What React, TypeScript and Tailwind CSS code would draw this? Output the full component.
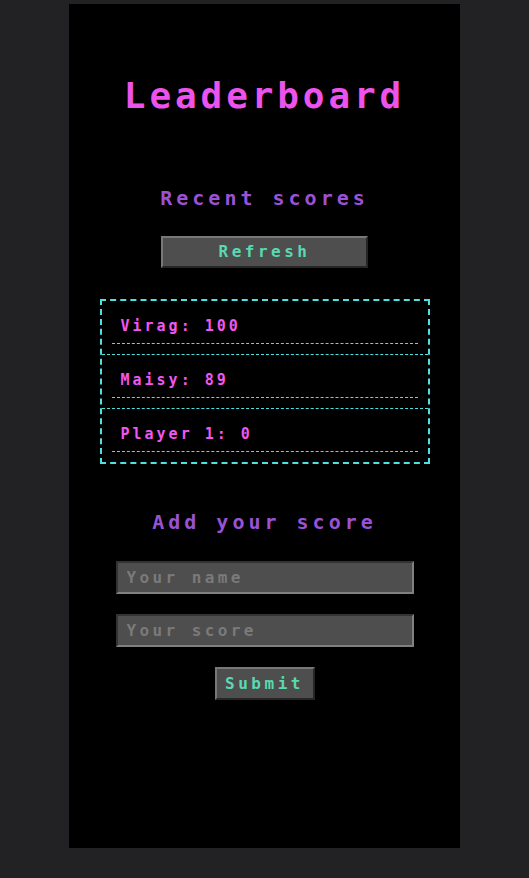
import { useState } from "react"

type Score = { name: string; score: number }

const initialScores: Score[] = [
  { name: "Virag", score: 100 },
  { name: "Maisy", score: 89 },
  { name: "Player 1", score: 0 },
]

const mono = "font-['DejaVu_Sans_Mono','Liberation_Mono',monospace] font-bold"

export default function App() {
  const [scores] = useState<Score[]>(initialScores)
  const [name, setName] = useState("")
  const [score, setScore] = useState("")

  return (
    <div className="min-h-[878px] bg-[#222224] pt-[4px]">
      <main
        className={`${mono} mx-auto flex h-[844px] w-[391px] flex-col items-center bg-black pt-[74px]`}
      >
        <h1 className="text-[36px] leading-[36px] tracking-[3.9px] text-[#ec52ec]">
          Leaderboard
        </h1>

        <h2 className="mt-[74px] text-[20px] leading-[20px] tracking-[4px] text-[#9a52d4]">
          Recent scores
        </h2>

        <button className="mt-[28px] h-[32px] w-[207px] border-2 border-t-[#787878] border-l-[#787878] border-b-[#262626] border-r-[#262626] bg-[#4e4e4e] text-[16px] tracking-[3.5px] text-[#5ad8b0]">
          Refresh
        </button>

        <ul className="mt-[31px] w-[330px] border-2 border-dashed border-[#4fe0e0]">
          {scores.map((s, i) => (
            <li
              key={s.name}
              className={`px-[10px] pt-[13px] pb-[10px] ${
                i < scores.length - 1 ? "border-b border-dashed border-[#4fe0e0]" : ""
              }`}
            >
              <div className="border-b border-dashed border-[#4fe0e0] pb-[5px] pl-[9px] text-[15px] leading-[24px] tracking-[3px] text-[#f056f0]">
                {s.name}: {s.score}
              </div>
            </li>
          ))}
        </ul>

        <h2 className="mt-[48px] text-[20px] leading-[20px] tracking-[4px] text-[#9a52d4]">
          Add your score
        </h2>

        <form
          className="mt-[29px] flex flex-col items-center gap-[20px]"
          onSubmit={(e) => e.preventDefault()}
        >
          <input
            value={name}
            onChange={(e) => setName(e.target.value)}
            placeholder="Your name"
            className="h-[33px] w-[298px] border-2 border-t-[#333] border-l-[#333] border-b-[#808080] border-r-[#808080] bg-[#4e4e4e] px-[9px] text-[16px] tracking-[3.4px] text-[#ddd] outline-none placeholder:text-[#7a7a7a]"
          />
          <input
            value={score}
            onChange={(e) => setScore(e.target.value)}
            placeholder="Your score"
            className="h-[33px] w-[298px] border-2 border-t-[#333] border-l-[#333] border-b-[#808080] border-r-[#808080] bg-[#4e4e4e] px-[9px] text-[16px] tracking-[3.4px] text-[#ddd] outline-none placeholder:text-[#7a7a7a]"
          />
          <button
            type="submit"
            className="h-[33px] w-[100px] border-2 border-t-[#787878] border-l-[#787878] border-b-[#262626] border-r-[#262626] bg-[#4e4e4e] text-[16px] tracking-[3.5px] text-[#5ad8b0]"
          >
            Submit
          </button>
        </form>
      </main>
    </div>
  )
}
